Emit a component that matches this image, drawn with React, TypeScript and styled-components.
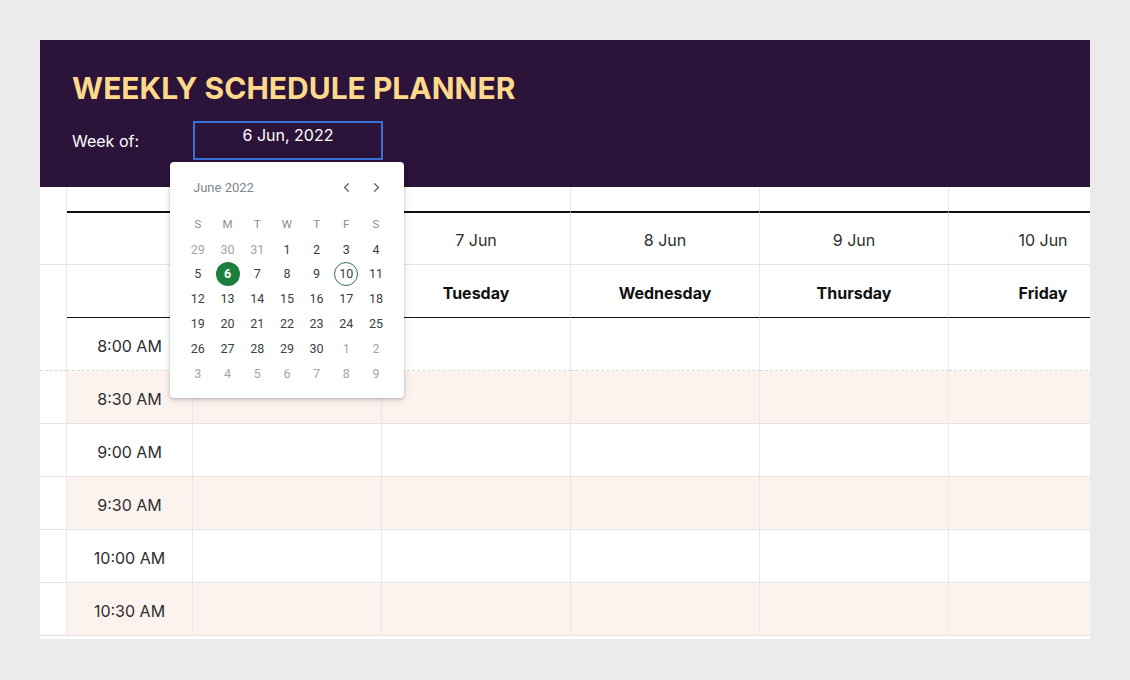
import styled, { createGlobalStyle } from 'styled-components';
import { ChevronLeft, ChevronRight } from 'lucide-react';

const GlobalStyle = createGlobalStyle`
    body {
        margin: 0;
        background: #ebebeb;
        font-family: Inter, "Liberation Sans", Arial, sans-serif;
    }
`;

const Page = styled.div`
    padding: 40px;
`;

const Card = styled.div`
    position: relative;
    width: 1050px;
    height: 599px;
    background: #fff;
    overflow: hidden;
`;

const Header = styled.div`
    height: 147px;
    box-sizing: border-box;
    padding: 30px 0 0 32px;
    background: #2c1339;
`;

const Title = styled.h1`
    margin: 0;
    font-size: 30px;
    line-height: 36px;
    font-weight: 700;
    color: #fdd98b;
`;

const WeekRow = styled.div`
    display: flex;
    align-items: center;
    margin-top: 15px;
`;

const WeekLabel = styled.span`
    width: 121px;
    font-size: 16px;
    color: #fff;
`;

const DateInput = styled.div`
    width: 190px;
    height: 39px;
    box-sizing: border-box;
    border: 2px solid #3a6fd6;
    padding-top: 2px;
    text-align: center;
    font-size: 16px;
    color: #fff;
`;

const Grid = styled.div`
    width: 1050px;
    overflow: hidden;
`;

const Row = styled.div<{ $h: number }>`
    display: grid;
    grid-template-columns: 27px 126px repeat(5, 189px);
    height: ${(p) => p.$h}px;
`;

const Cell = styled.div<{ $top?: string; $bottom?: string; $tint?: boolean; $bold?: boolean }>`
    box-sizing: border-box;
    display: flex;
    align-items: center;
    justify-content: center;
    padding-top: 3px;
    border-right: 1px solid #e9e9e9;
    border-top: ${(p) => p.$top || 'none'};
    border-bottom: ${(p) => p.$bottom || 'none'};
    background: ${(p) => (p.$tint ? '#fdf3ee' : '#fff')};
    font-size: 16px;
    font-weight: ${(p) => (p.$bold ? 700 : 400)};
    color: ${(p) => (p.$bold ? '#111' : '#2e2e2e')};
`;

const Popup = styled.div`
    position: absolute;
    left: 130px;
    top: 122px;
    width: 234px;
    box-sizing: border-box;
    padding: 14px 13px 12px;
    background: #fff;
    border-radius: 4px;
    box-shadow: 0 1px 3px rgba(0, 0, 0, 0.2), 0 2px 8px rgba(0, 0, 0, 0.12);
    font-family: Roboto, "Liberation Sans", Arial, sans-serif;
`;

const PopupHead = styled.div`
    display: flex;
    align-items: center;
    height: 22px;
    margin-bottom: 14px;
    padding-left: 10px;
    color: #80868b;
    font-size: 13px;
`;

const MonthName = styled.span`
    flex: 1;
`;

const NavButton = styled.span`
    display: flex;
    justify-content: center;
    width: 29.7px;
    color: #5f6368;
`;

const DayGrid = styled.div`
    display: grid;
    grid-template-columns: repeat(7, 29.7px);
    grid-auto-rows: 24.8px;
`;

const DayCell = styled.div<{ $muted?: boolean; $head?: boolean; $selected?: boolean; $today?: boolean }>`
    display: flex;
    align-items: center;
    justify-content: center;
    font-size: ${(p) => (p.$head ? '11.5px' : '12.5px')};
    color: ${(p) => (p.$selected ? '#fff' : p.$head ? '#8a8d91' : p.$muted ? '#a2a5a9' : '#3c4043')};
    font-weight: ${(p) => (p.$selected ? 700 : 400)};

    span {
        display: flex;
        align-items: center;
        justify-content: center;
        width: 24px;
        height: 24px;
        box-sizing: border-box;
        border-radius: 50%;
        background: ${(p) => (p.$selected ? '#1b7f3b' : 'transparent')};
        border: ${(p) => (p.$today ? '1px solid #2f6e4e' : 'none')};
    }
`;

const days = [
    { date: '6 Jun', name: 'Monday' },
    { date: '7 Jun', name: 'Tuesday' },
    { date: '8 Jun', name: 'Wednesday' },
    { date: '9 Jun', name: 'Thursday' },
    { date: '10 Jun', name: 'Friday' },
];

const times = ['8:00 AM', '8:30 AM', '9:00 AM', '9:30 AM', '10:00 AM', '10:30 AM'];

const calendar: { d: number; muted?: boolean }[] = [
    ...[29, 30, 31].map((d) => ({ d, muted: true })),
    ...Array.from({ length: 30 }, (_, i) => ({ d: i + 1 })),
    ...Array.from({ length: 9 }, (_, i) => ({ d: i + 1, muted: true })),
];

const LIGHT = '1px solid #e4e4e4';

const App = () => {
    return (
        <Page>
            <GlobalStyle />
            <Card>
                <Header>
                    <Title>WEEKLY SCHEDULE PLANNER</Title>
                    <WeekRow>
                        <WeekLabel>Week of:</WeekLabel>
                        <DateInput>6 Jun, 2022</DateInput>
                    </WeekRow>
                </Header>
                <Grid>
                    <Row $h={24}>
                        {Array.from({ length: 7 }, (_, i) => (
                            <Cell key={i} />
                        ))}
                    </Row>
                    <Row $h={54}>
                        <Cell $bottom={LIGHT} />
                        <Cell $top="2px solid #111" $bottom={LIGHT} />
                        {days.map((d) => (
                            <Cell key={d.date} $top="2px solid #111" $bottom={LIGHT}>
                                {d.date}
                            </Cell>
                        ))}
                    </Row>
                    <Row $h={53}>
                        <Cell />
                        <Cell $bottom="1px solid #111" />
                        {days.map((d) => (
                            <Cell key={d.name} $bottom="1px solid #111" $bold>
                                {d.name}
                            </Cell>
                        ))}
                    </Row>
                    {times.map((t, r) => {
                        const line = r === 0 ? '1px dashed #d9d9d9' : LIGHT;
                        const tint = r % 2 === 1;
                        return (
                            <Row key={t} $h={53}>
                                <Cell $bottom={line} />
                                <Cell $bottom={line} $tint={tint}>
                                    {t}
                                </Cell>
                                {days.map((d) => (
                                    <Cell key={d.date} $bottom={line} $tint={tint} />
                                ))}
                            </Row>
                        );
                    })}
                </Grid>
                <Popup>
                    <PopupHead>
                        <MonthName>June 2022</MonthName>
                        <NavButton>
                            <ChevronLeft size={15} strokeWidth={2} />
                        </NavButton>
                        <NavButton>
                            <ChevronRight size={15} strokeWidth={2} />
                        </NavButton>
                    </PopupHead>
                    <DayGrid>
                        {['S', 'M', 'T', 'W', 'T', 'F', 'S'].map((w, i) => (
                            <DayCell key={i} $head>
                                {w}
                            </DayCell>
                        ))}
                        {calendar.map((c, i) => (
                            <DayCell
                                key={i}
                                $muted={c.muted}
                                $selected={!c.muted && c.d === 6}
                                $today={!c.muted && c.d === 10}
                            >
                                <span>{c.d}</span>
                            </DayCell>
                        ))}
                    </DayGrid>
                </Popup>
            </Card>
        </Page>
    );
};

export default App;
